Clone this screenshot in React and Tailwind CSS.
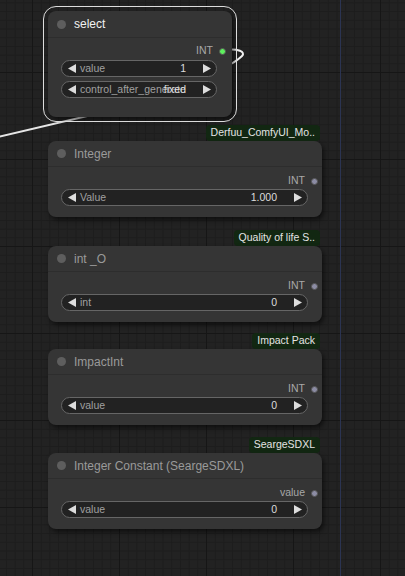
import React from "react";

const minor = [1, 2, 3, 4, 5, 6, 7, 8, 9];

function Grid() {
  return (
    <svg className="absolute inset-0" width="405" height="576">
      <defs>
        <pattern id="grid" width="87" height="87" patternUnits="userSpaceOnUse" x="32" y="72">
          {minor.map((i) => (
            <rect key={"v" + i} x={i * 8.7} y="0" width="1" height="87" fill="#1c1c1c" />
          ))}
          {minor.map((i) => (
            <rect key={"h" + i} x="0" y={i * 8.7} width="87" height="1" fill="#1c1c1c" />
          ))}
          <rect x="0" y="0" width="1" height="87" fill="#161616" />
          <rect x="0" y="0" width="87" height="1" fill="#161616" />
        </pattern>
      </defs>
      <rect width="405" height="576" fill="url(#grid)" />
      <rect x="340" y="0" width="1" height="576" fill="#2b3452" />
    </svg>
  );
}

function Links() {
  return (
    <svg className="absolute inset-0" width="405" height="576">
      <path d="M-2 137 L100 113" stroke="#e6e6e6" strokeWidth="2" fill="none" />
      <path
        d="M225 50 C238 48 246 52 242 56 C239 59 236 61 231 64"
        stroke="#f0f0f0"
        strokeWidth="2"
        fill="none"
      />
    </svg>
  );
}

function Arrow({ dir }) {
  return (
    <svg width="8" height="9" viewBox="0 0 8 9" className="shrink-0">
      {dir === "left" ? (
        <polygon points="8,0 8,9 0,4.5" fill="#dddddd" />
      ) : (
        <polygon points="0,0 0,9 8,4.5" fill="#dddddd" />
      )}
    </svg>
  );
}

function Widget({ label, value, extra = "" }) {
  return (
    <div
      className={
        "ml-[13px] mr-[14px] h-[17px] rounded-full border border-[#666] bg-[#222] flex items-center pl-[6px] pr-[5px] text-[10.5px] leading-none " +
        extra
      }
    >
      <Arrow dir="left" />
      <span className="ml-[4px] w-0 flex-1 whitespace-nowrap text-[#a0a0a0]">{label}</span>
      <span className="mr-[17px] whitespace-nowrap text-[#dddddd]">{value}</span>
      <Arrow dir="right" />
    </div>
  );
}

function Output({ label, color, pr }) {
  return (
    <div className={"flex items-center justify-end gap-[6px] h-[14px] text-[10.5px] text-[#a8a8a8] " + pr}>
      <span>{label}</span>
      <span
        className="block w-[7px] h-[7px] rounded-full border border-[#555]"
        style={{ backgroundColor: color }}
      />
    </div>
  );
}

function Node({ title, badge, output, widget, mt }) {
  return (
    <div className={"w-[274px] flex flex-col items-end " + mt}>
      <div className="mr-[2px] h-[16px] px-[5px] rounded-[4px] bg-[#122712] text-[10.5px] text-[#e4e4e4] flex items-center whitespace-nowrap">
        {badge}
      </div>
      <div className="w-[274px] h-[76px] rounded-[8px] bg-[#353535] shadow-[2px_3px_5px_rgba(0,0,0,0.55)] flex flex-col">
        <div className="h-[26px] flex items-center border-b border-[#2d2d2d]">
          <span className="ml-[9px] block w-[9px] h-[9px] rounded-full bg-[#5e5e5e]" />
          <span className="ml-[8px] text-[12px] text-[#9a9a9a] whitespace-nowrap">{title}</span>
        </div>
        <div className="mt-[7px]">
          <Output label={output} color="#8c8ca4" pr="pr-[4px]" />
        </div>
        <div className="mt-[1px]">
          <Widget label={widget.label} value={widget.value} />
        </div>
      </div>
    </div>
  );
}

export default function App() {
  return (
    <div className="relative w-[405px] h-[576px] overflow-hidden bg-[#222222] font-['Liberation_Sans',Arial,sans-serif]">
      <Grid />
      <Links />
      <div className="relative flex flex-col items-start pl-[48px] pt-[11px]">
        <div className="relative w-[184px] h-[106px] rounded-[8px] bg-[#353535] shadow-[2px_3px_5px_rgba(0,0,0,0.55)] flex flex-col">
          <div className="pointer-events-none absolute -inset-[5px] rounded-[13px] border-[1.5px] border-[#dcdcdc]" />
          <div className="h-[27px] flex items-center border-b border-[#2d2d2d]">
            <span className="ml-[9px] block w-[9px] h-[9px] rounded-full bg-[#5e5e5e]" />
            <span className="ml-[8px] text-[12px] text-[#f2f2f2] whitespace-nowrap">select</span>
          </div>
          <div className="mt-[6px]">
            <Output label="INT" color="#5ef05e" pr="pr-[6px]" />
          </div>
          <div className="mt-[2px]">
            <Widget label="value" value="1" extra="mr-[15px]" />
          </div>
          <div className="mt-[4px]">
            <Widget label="control_after_generate" value="fixed" extra="mr-[15px]" />
          </div>
        </div>

        <Node
          mt="mt-[8px]"
          title="Integer"
          badge="Derfuu_ComfyUI_Mo.."
          output="INT"
          widget={{ label: "Value", value: "1.000" }}
        />
        <Node
          mt="mt-[13px]"
          title="int _O"
          badge="Quality of life S.."
          output="INT"
          widget={{ label: "int", value: "0" }}
        />
        <Node
          mt="mt-[11px]"
          title="ImpactInt"
          badge="Impact Pack"
          output="INT"
          widget={{ label: "value", value: "0" }}
        />
        <Node
          mt="mt-[12px]"
          title="Integer Constant (SeargeSDXL)"
          badge="SeargeSDXL"
          output="value"
          widget={{ label: "value", value: "0" }}
        />
      </div>
    </div>
  );
}
